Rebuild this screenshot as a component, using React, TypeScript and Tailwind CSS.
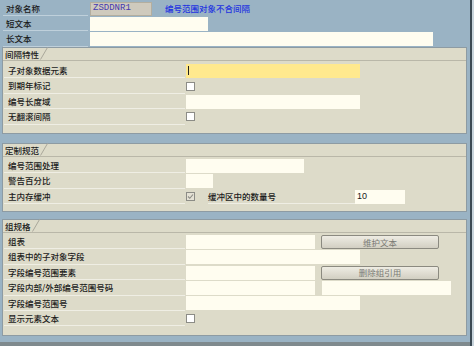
import React from "react";

const cjk = "font-['Noto_Sans_CJK_SC','Noto_Sans',sans-serif]";

function Field({ w, yellow, children }: { w: number; yellow?: boolean; children?: React.ReactNode }) {
  return (
    <div
      className={`flex h-[14px] shrink-0 items-center ${yellow ? "bg-[#ffe98e]" : "bg-[#fffdf0]"}`}
      style={{ width: w }}
    >
      {children}
    </div>
  );
}

function Check({ checked }: { checked?: boolean }) {
  return (
    <div
      className={`flex h-[9px] w-[9px] shrink-0 items-center justify-center border border-[#8c8c86] ${
        checked ? "bg-[#e4e1d4]" : "bg-white"
      }`}
    >
      {checked && (
        <svg width="7" height="7" viewBox="0 0 7 7">
          <path d="M1 3.5 L2.8 5.3 L6 1.5" fill="none" stroke="#8a8a84" strokeWidth="1.1" />
        </svg>
      )}
    </div>
  );
}

function Btn({ label }: { label: string }) {
  return (
    <div className="ml-[6px] flex h-[14px] w-[118px] shrink-0 items-center justify-center rounded-[2px] border border-[#8b8a80] bg-gradient-to-b from-[#eeece3] to-[#d2cfc2] font-normal text-[#7a7a74]">
      {label}
    </div>
  );
}

function Row({ label, children }: { label: string; children?: React.ReactNode }) {
  return (
    <div className="flex h-[15.4px] items-center">
      <div className="ml-[1px] flex h-full w-[181px] shrink-0 items-center border-b border-[#efeee4] pl-[4px] text-[#1a1a1a]">
        {label}
      </div>
      <div className="ml-[1px] flex items-center">{children}</div>
    </div>
  );
}

function Section({ title, h, children }: { title: string; h: number; children: React.ReactNode }) {
  return (
    <div
      className="ml-[2px] flex w-[465px] shrink-0 flex-col border border-[#8d9ba3] bg-[#dddbc9]"
      style={{ height: h }}
    >
      <div className="flex h-[13px] shrink-0 items-end border-b border-[#b9b7a8]">
        <div className="flex h-full items-center pl-[2px] pr-[4px] text-[#1a1a1a]">{title}</div>
        <svg width="8" height="13" viewBox="0 0 8 13" className="-ml-[3px]">
          <path d="M0.5 12.5 L7.5 0.5" stroke="#a9a79a" strokeWidth="1" fill="none" />
        </svg>
      </div>
      {children}
    </div>
  );
}

export default function App() {
  return (
    <div className={`flex h-[346px] w-[474px] overflow-hidden bg-[#9ab3c4] text-[8.5px] font-medium leading-none ${cjk}`}>
      <div className="flex w-[470px] flex-col pt-[1px]">
        <div className="flex h-[15.5px] items-center px-[3px]">
          <div className="flex h-full w-[85px] items-center border-b border-[#bfd0db] pl-[3px] text-[#1a1a1a]">对象名称</div>
          <div className="ml-[2px] flex h-[14px] w-[62px] items-center border border-[#b3ae9f] bg-[#cfcabd] pl-[2px] font-['Liberation_Mono',monospace] text-[9px] font-normal text-[#4438b0]">
            ZSDDNR1
          </div>
          <div className="ml-[13px] text-[#1f34e0]">编号范围对象不合间隔</div>
        </div>
        <div className="flex h-[15.5px] items-center px-[3px]">
          <div className="flex h-full w-[85px] items-center border-b border-[#bfd0db] pl-[3px] text-[#1a1a1a]">短文本</div>
          <div className="ml-[2px] h-[14px] w-[118px] bg-[#fffdf0]" />
        </div>
        <div className="flex h-[15.5px] items-center px-[3px]">
          <div className="flex h-full w-[85px] items-center border-b border-[#bfd0db] pl-[3px] text-[#1a1a1a]">长文本</div>
          <div className="ml-[2px] h-[14px] w-[343px] bg-[#fffdf0]" />
        </div>

        <div className="mt-[0.5px]">
          <Section title="间隔特性" h={87}>
            <div className="pt-[2px]">
              <Row label="子对象数据元素">
                <Field w={174} yellow>
                  <div className="ml-[2px] h-[9px] w-[1px] bg-[#222]" />
                </Field>
              </Row>
              <Row label="到期年标记">
                <Check />
              </Row>
              <Row label="编号长度域">
                <Field w={174} />
              </Row>
              <Row label="无翻滚间隔">
                <Check />
              </Row>
            </div>
          </Section>
        </div>

        <div className="mt-[9px]">
          <Section title="定制规范" h={69}>
            <div className="pt-[1px]">
              <Row label="编号范围处理">
                <Field w={118} />
              </Row>
              <Row label="警告百分比">
                <Field w={27} />
              </Row>
              <Row label="主内存缓冲">
                <Check checked />
                <div className="ml-[13px] flex h-[15px] w-[147px] items-center border-b border-[#efeee4] text-[#1a1a1a]">
                  缓冲区中的数量号
                </div>
                <Field w={50}>
                  <span className="pl-[2px] font-['Liberation_Sans',sans-serif] text-[9px] font-normal text-[#1a1a1a]">10</span>
                </Field>
              </Row>
            </div>
          </Section>
        </div>

        <div className="mt-[7px]">
          <Section title="组规格" h={117}>
            <div className="pt-[1px]">
              <Row label="组表">
                <Field w={129} />
                <Btn label="维护文本" />
              </Row>
              <Row label="组表中的子对象字段">
                <Field w={174} />
              </Row>
              <Row label="字段编号范围要素">
                <Field w={129} />
                <Btn label="删除组引用" />
              </Row>
              <Row label="字段内部/外部编号范围号码">
                <Field w={129} />
                <div className="ml-[7px]">
                  <Field w={129} />
                </div>
              </Row>
              <Row label="字段编号范围号">
                <Field w={174} />
              </Row>
              <Row label="显示元素文本">
                <Check />
              </Row>
            </div>
          </Section>
        </div>
        <div className="mt-[6px] h-[4px] w-full bg-[#7f8a8e]" />
      </div>
      <div className="w-[2px] shrink-0 bg-[#3c4a54]" />
      <div className="w-[2px] shrink-0 bg-[#c9d5dd]" />
    </div>
  );
}
